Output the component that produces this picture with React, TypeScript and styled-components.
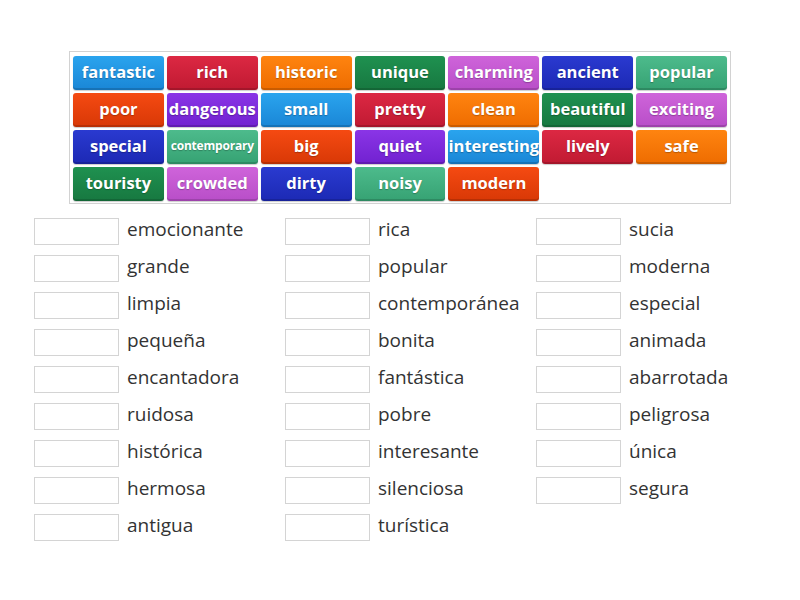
import React from 'react';
import styled, { createGlobalStyle } from 'styled-components';

type Tone = { top: string; bottom: string };

const tones: Tone[] = [
  { top: '#2aa4ee', bottom: '#1a86d6' }, // blue
  { top: '#dc2843', bottom: '#c01a32' }, // crimson
  { top: '#ff8410', bottom: '#ee6c00' }, // orange
  { top: '#1f9150', bottom: '#177840' }, // dark green
  { top: '#cf64da', bottom: '#b84ec8' }, // orchid
  { top: '#2a3ad0', bottom: '#1c29b4' }, // dark blue
  { top: '#4dbb8c', bottom: '#36a273' }, // teal
  { top: '#f54a12', bottom: '#d83806' }, // red orange
  { top: '#8a35e6', bottom: '#7121d0' }, // purple
];

const words = [
  'fantastic', 'rich', 'historic', 'unique', 'charming', 'ancient', 'popular',
  'poor', 'dangerous', 'small', 'pretty', 'clean', 'beautiful', 'exciting',
  'special', 'contemporary', 'big', 'quiet', 'interesting', 'lively', 'safe',
  'touristy', 'crowded', 'dirty', 'noisy', 'modern',
];

const columns = [
  ['emocionante', 'grande', 'limpia', 'pequeña', 'encantadora', 'ruidosa', 'histórica', 'hermosa', 'antigua'],
  ['rica', 'popular', 'contemporánea', 'bonita', 'fantástica', 'pobre', 'interesante', 'silenciosa', 'turística'],
  ['sucia', 'moderna', 'especial', 'animada', 'abarrotada', 'peligrosa', 'única', 'segura'],
];

const GlobalStyle = createGlobalStyle`
  body {
    margin: 0;
    background: #ffffff;
    font-family: "Open Sans", "Liberation Sans", sans-serif;
  }
`;

const App: React.FC = () => (
  <Page>
    <GlobalStyle />
    <Bank>
      {words.map((w, i) => (
        <Tile key={w} $tone={tones[i % tones.length]} $small={w.length > 11}>
          {w}
        </Tile>
      ))}
    </Bank>
    <Answers>
      {columns.map((col, ci) => (
        <Column key={ci}>
          {col.map((word) => (
            <Row key={word}>
              <Slot />
              <Label>{word}</Label>
            </Row>
          ))}
        </Column>
      ))}
    </Answers>
  </Page>
);

export default App;

const Page = styled.div`
  width: 800px;
  height: 600px;
  padding-top: 51px;
  box-sizing: border-box;
`;

const Bank = styled.div`
  margin-left: 69px;
  width: 662px;
  box-sizing: border-box;
  border: 1px solid #d2d2d2;
  padding: 4px 3px 1px 3px;
  display: grid;
  grid-template-columns: repeat(7, 1fr);
  grid-auto-rows: 34px;
  gap: 3px;
  height: 153px;
`;

const Tile = styled.div<{ $tone: Tone; $small: boolean }>`
  display: flex;
  align-items: center;
  justify-content: center;
  box-sizing: border-box;
  padding-bottom: 4px;
  border-radius: 3px;
  background: linear-gradient(${(p) => p.$tone.top}, ${(p) => p.$tone.bottom});
  box-shadow: inset 0 -2px 0 rgba(0, 0, 0, 0.15), 0 1px 1px rgba(0, 0, 0, 0.2);
  color: #ffffff;
  font-weight: 700;
  font-size: ${(p) => (p.$small ? '12px' : '16.5px')};
  letter-spacing: ${(p) => (p.$small ? '-0.2px' : '0')};
  text-shadow: 0 1px 1px rgba(0, 0, 0, 0.25);
  white-space: nowrap;
  overflow: hidden;
`;

const Answers = styled.div`
  display: flex;
  margin-top: 14px;
  margin-left: 34px;
`;

const Column = styled.div`
  width: 251px;
  display: flex;
  flex-direction: column;
  gap: 10px;
`;

const Row = styled.div`
  display: flex;
  align-items: center;
  height: 27px;
  gap: 8px;
`;

const Slot = styled.div`
  width: 85px;
  height: 27px;
  box-sizing: border-box;
  border: 1px solid #d4d4d4;
  background: #ffffff;
  flex-shrink: 0;
`;

const Label = styled.span`
  font-size: 19px;
  color: #333333;
  margin-top: -6px;
`;
